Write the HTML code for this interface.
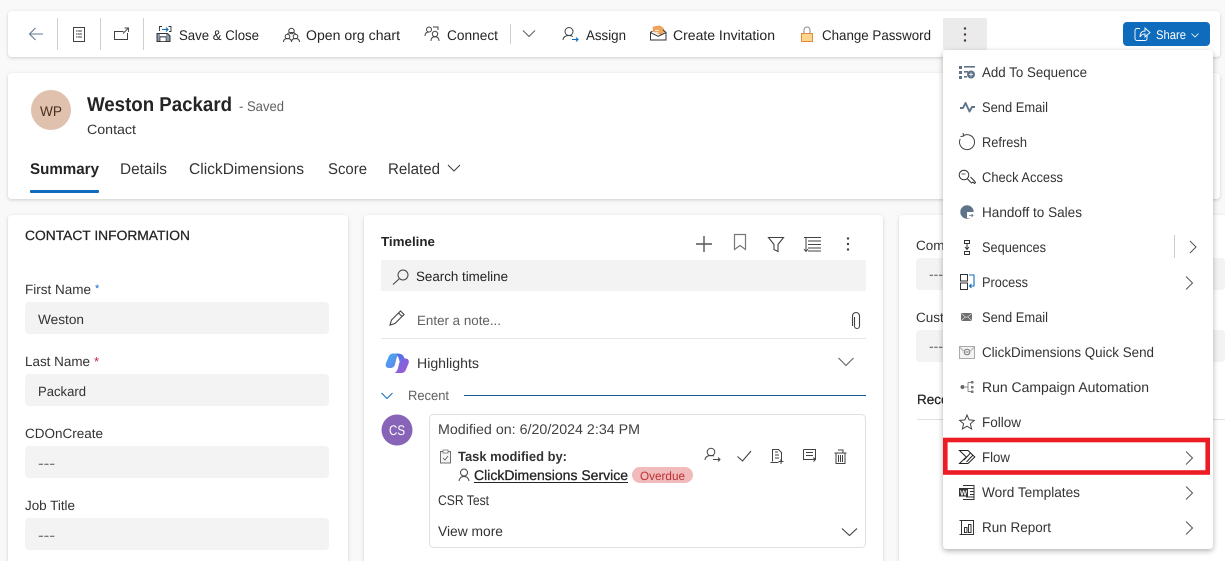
<!DOCTYPE html>
<html><head><meta charset="utf-8"><title>Weston Packard - Contact</title>
<style>
html,body{margin:0;padding:0;width:1225px;height:561px;overflow:hidden;background:#f9f9f9}
svg{display:block}
text{font-family:"Liberation Sans",sans-serif;font-size:14px;fill:#242424}
.g{fill:#616161}.b{font-weight:700}.m{fill:#333}
.i{fill:none;stroke:#424242;stroke-width:1}
</style></head><body>
<svg width="1225" height="561" viewBox="0 0 1225 561" xmlns="http://www.w3.org/2000/svg" text-rendering="geometricPrecision">
<defs>
<filter id="s" x="-5%" y="-20%" width="110%" height="140%"><feDropShadow dx="0" dy="1" stdDeviation="1.5" flood-color="#000" flood-opacity=".18"/></filter>
<filter id="ms" x="-10%" y="-5%" width="120%" height="110%"><feDropShadow dx="0" dy="2" stdDeviation="3" flood-color="#000" flood-opacity=".3"/></filter>
<linearGradient id="cl" x1="0" y1="0" x2="1" y2="1"><stop offset="0" stop-color="#3fb0f2"/><stop offset="1" stop-color="#6f7bea"/></linearGradient>
<linearGradient id="cr" x1="0" y1="0" x2="1" y2="1"><stop offset="0" stop-color="#5f70ea"/><stop offset="1" stop-color="#a954cf"/></linearGradient>
</defs>
<rect width="1225" height="561" fill="#f9f9f9"/>
<!-- cards -->
<rect x="8" y="11" width="1212" height="46" rx="4" fill="#fff" filter="url(#s)"/>
<rect x="8" y="73" width="1212" height="126" rx="4" fill="#fff" filter="url(#s)"/>
<rect x="8" y="215" width="340" height="360" rx="4" fill="#fff" filter="url(#s)"/>
<rect x="364" y="215" width="519" height="360" rx="4" fill="#fff" filter="url(#s)"/>
<rect x="899" y="215" width="340" height="360" rx="4" fill="#fff" filter="url(#s)"/>

<!-- toolbar -->
<g stroke="#cfcfcf"><path d="M57.5 18V50M100.5 18V50M143.5 18V50M510.5 24V44"/></g>
<path d="M43 34H29.5M35.5 28l-6 6 6 6" fill="none" stroke="#66788f" stroke-width="1.1"/>
<g class="i"><rect x="73.5" y="27.5" width="11" height="14"/><path d="M76 31h6M76 34h6M76 37h6" stroke-dasharray="1 .5 5 0"/></g>
<g class="i"><path d="M127.5 33v6.500h-13v-8h9"/><path d="M123 33.500l5-5M124.500 28h4v4" stroke-width=".9"/></g>
<g><path d="M157 33.500h10.500l2.500 2.500v5.500h-13z" fill="#8a9bb0" stroke="#333"/><rect x="160" y="37" width="6" height="4.500" fill="#fff" stroke="#333" stroke-width=".7"/><path d="M160 34h6v2h-6z" fill="#fff"/><path d="M159.500 31v-4.500h2.500M168.500 26.500h2.500v5h-2" fill="none" stroke="#333" stroke-width=".9"/><path d="M162 29.500h6M166 27.500l2 2-2 2" fill="none" stroke="#0f6cbd" stroke-width="1.100"/></g>
<text x="179" y="40" textLength="80" lengthAdjust="spacingAndGlyphs">Save &amp; Close</text>
<g class="i"><circle cx="291.500" cy="31" r="2.700"/><circle cx="287.500" cy="36.500" r="2.300"/><circle cx="295.500" cy="36.500" r="2.300"/><path d="M283.500 42c0-2.500 1.500-3.500 4-3.500s4 1 4 3.500M291.500 42c0-2.500 1.500-3.500 4-3.500s4 1 4 3.500M287.500 34c.5-1 2-1.500 4-1.500s3.500.5 4 1.500"/></g>
<text x="306" y="40" textLength="94" lengthAdjust="spacingAndGlyphs">Open org chart</text>
<g class="i"><circle cx="429" cy="29.500" r="2.500"/><path d="M425 36c0-2.500 1.500-4 4-4"/><circle cx="435" cy="34" r="2.700"/><path d="M431 41c0-2.800 1.500-4.300 4-4.300s4 1.500 4 4.300"/><path d="M433 27h5v3"/></g>
<text x="447" y="40" textLength="51" lengthAdjust="spacingAndGlyphs">Connect</text>
<path d="M523 30.500l6 6 6-6" fill="none" stroke="#616161" stroke-width="1.100"/>
<g class="i"><circle cx="569" cy="31.500" r="4"/><path d="M563 40c.3-3 2.500-4.500 6-4.500 1.500 0 2.800.3 3.800 1"/></g>
<path d="M572 39.500h6M576 37.500l2 2-2 2" fill="none" stroke="#0f6cbd" stroke-width="1.100"/>
<text x="586" y="40" textLength="40" lengthAdjust="spacingAndGlyphs">Assign</text>
<path d="M653 27l6.500-1.200 3.500 2.200 1 3.500-3.500 3-7-3z" fill="#f2a65a" stroke="#e0914a" stroke-width=".6"/>
<path d="M655 30.500h4M655.500 32.500h3" stroke="#fff" stroke-width=".8"/>
<path d="M650.500 32.500l2-1.500M663 29.800l3 2.700v7.500h-15.500v-7.500l7.700 3.800 7.800-3.800" fill="none" stroke="#333" stroke-width="1"/>
<text x="673" y="40" textLength="102" lengthAdjust="spacingAndGlyphs">Create Invitation</text>
<rect x="801.500" y="33.500" width="11" height="8" fill="#fbd68c" stroke="#e8883a"/>
<path d="M804 33.500V30a3 3 0 0 1 6 0v3.500" fill="none" stroke="#8a8a8a"/>
<text x="822" y="40" textLength="109" lengthAdjust="spacingAndGlyphs">Change Password</text>
<rect x="943" y="18" width="44" height="32" rx="2" fill="#ebebeb"/>
<g fill="#50382c"><circle cx="965" cy="28.500" r="1.200"/><circle cx="965" cy="34.500" r="1.200"/><circle cx="965" cy="40.500" r="1.200"/></g>
<rect x="1123" y="22" width="87" height="24" rx="4" fill="#0f6cbd"/>
<path d="M1148 34.500v4a2 2 0 0 1-2 2h-8a2 2 0 0 1-2-2v-8a2 2 0 0 1 2-2h3" fill="none" stroke="#fff" stroke-width=".9" transform="translate(-1 0)"/>
<path d="M1140 37c0-4 2-6 5-6v-3l5 4.500-5 4.500v-3c-2.500 0-4 1-5 3z" fill="none" stroke="#fff" stroke-width=".9"/>
<text x="1156" y="39" style="fill:#fff;font-size:12.500px" textLength="30" lengthAdjust="spacingAndGlyphs">Share</text>
<path d="M1191.500 33.500l3.500 3.500 3.500-3.500" fill="none" stroke="#fff" stroke-width=".8"/>

<!-- header -->
<circle cx="51" cy="110" r="20" fill="#dfc1ae"/>
<text x="40" y="116" style="font-size:14px;fill:#4a2f20" textLength="22" lengthAdjust="spacingAndGlyphs">WP</text>
<text x="87" y="111" class="b" style="font-size:20px" textLength="145" lengthAdjust="spacingAndGlyphs">Weston Packard</text>
<text x="239" y="111" class="g" textLength="45" lengthAdjust="spacingAndGlyphs">- Saved</text>
<text x="87" y="134" style="font-size:13.500px;fill:#333" textLength="49" lengthAdjust="spacingAndGlyphs">Contact</text>
<text x="30" y="174" class="b" style="font-size:15.500px" textLength="69" lengthAdjust="spacingAndGlyphs">Summary</text>
<text x="120" y="174" style="font-size:15.500px;fill:#333" textLength="47" lengthAdjust="spacingAndGlyphs">Details</text>
<text x="189" y="174" style="font-size:15.500px;fill:#333" textLength="115" lengthAdjust="spacingAndGlyphs">ClickDimensions</text>
<text x="328" y="174" style="font-size:15.500px;fill:#333" textLength="39" lengthAdjust="spacingAndGlyphs">Score</text>
<text x="388" y="174" style="font-size:15.500px;fill:#333" textLength="52" lengthAdjust="spacingAndGlyphs">Related</text>
<path d="M448 165l6 6 6-6" fill="none" stroke="#424242" stroke-width="1.100"/>
<rect x="30" y="190" width="69" height="3" rx="1" fill="#0f6cbd"/>

<!-- contact info -->
<text x="25" y="240" style="font-size:13.500px;stroke:#242424;stroke-width:.25" textLength="165" lengthAdjust="spacingAndGlyphs">CONTACT INFORMATION</text>
<text x="25" y="294" style="font-size:13.500px;fill:#333" textLength="66" lengthAdjust="spacingAndGlyphs">First Name</text>
<text x="95" y="292" style="font-size:11px;fill:#0f6cbd">*</text>
<rect x="25" y="302" width="304" height="32" rx="4" fill="#f3f3f3"/>
<text x="38" y="324" style="font-size:13.500px;fill:#333" textLength="46" lengthAdjust="spacingAndGlyphs">Weston</text>
<text x="25" y="366" style="font-size:13.500px;fill:#333" textLength="65" lengthAdjust="spacingAndGlyphs">Last Name</text>
<text x="94" y="366" style="font-size:13px;fill:#c4314b">*</text>
<rect x="25" y="374" width="304" height="32" rx="4" fill="#f3f3f3"/>
<text x="38" y="396" style="font-size:13.500px;fill:#333" textLength="48" lengthAdjust="spacingAndGlyphs">Packard</text>
<text x="25" y="438" style="font-size:13.500px;fill:#333" textLength="78" lengthAdjust="spacingAndGlyphs">CDOnCreate</text>
<rect x="25" y="446" width="304" height="32" rx="4" fill="#f3f3f3"/>
<text x="38" y="468" class="g" textLength="17" lengthAdjust="spacingAndGlyphs">---</text>
<text x="25" y="510" style="font-size:13.500px;fill:#333" textLength="50" lengthAdjust="spacingAndGlyphs">Job Title</text>
<rect x="25" y="518" width="304" height="32" rx="4" fill="#f3f3f3"/>
<text x="38" y="540" class="g" textLength="17" lengthAdjust="spacingAndGlyphs">---</text>

<!-- timeline -->
<text x="381" y="246" class="b" style="font-size:13px" textLength="54" lengthAdjust="spacingAndGlyphs">Timeline</text>
<path d="M704 236v16M696 244h16" stroke="#555" stroke-width="1.400"/>
<path d="M734.500 234.500h11v15l-5.500-4-5.500 4z" fill="none" stroke="#777" stroke-width="1.200"/>
<path d="M768.500 237.500h15l-5.500 7v7l-4-2v-5z" fill="none" stroke="#424242" stroke-width="1.100"/>
<g fill="none" stroke="#424242"><path d="M804 237.500h17M808 241h13M808 244.500h13M808 248h13M808 251h13" stroke-width=".9"/><path d="M806 238v13M804 249l2 2.500 2-2.500" stroke-width="1"/></g>
<g fill="#424242"><circle cx="848" cy="238.500" r="1.200"/><circle cx="848" cy="244" r="1.200"/><circle cx="848" cy="249.500" r="1.200"/></g>
<rect x="381" y="260" width="485" height="31" fill="#f3f3f3"/>
<circle cx="403" cy="275" r="5" fill="none" stroke="#424242"/><path d="M399 279l-6 5.500" stroke="#424242" stroke-width="1.100"/>
<text x="416" y="281" style="font-size:13.500px" textLength="92" lengthAdjust="spacingAndGlyphs">Search timeline</text>
<path d="M390 325l1.500-5 9-9 3.500 3.500-9 9zM398.500 313l3.500 3.500" fill="none" stroke="#424242" stroke-width="1.100"/>
<text x="417" y="325" class="g" style="font-size:13.500px" textLength="84" lengthAdjust="spacingAndGlyphs">Enter a note...</text>
<path d="M853 317v9a2.500 2.500 0 0 0 5 0v-10a3.500 3.500 0 0 0-7 0v10" transform="translate(1.500 0)" fill="none" stroke="#424242" stroke-width="1.100"/>
<path d="M381 338.500H866" stroke="#e5e5e5"/>
<!-- copilot -->
<path d="M393 353.500h7c-2 1-3 3-3.500 5l-1.500 6c-.6 2.200-2.500 3.500-4.500 3.500h-1.500c-2.800 0-4-2.300-3-5l2.500-6c1-2.500 2.800-3.500 4.500-3.500z" fill="url(#cl)"/>
<path d="M401.500 373h-7c2-1 3-3 3.500-5l1.500-6c.6-2.200 2.500-3.500 4.500-3.500h1.500c2.800 0 4 2.300 3 5l-2.500 6c-1 2.500-2.800 3.500-4.500 3.500z" fill="url(#cr)"/>
<path d="M396 354h4c2.500 0 4 2.500 4.500 4.500-2 0-4 1-5 3-.5-3-1.500-6-3.500-7.500z" fill="#5a6ee6"/>
<text x="417" y="368" style="font-size:14px;fill:#333" textLength="62" lengthAdjust="spacingAndGlyphs">Highlights</text>
<path d="M838.500 358l7.500 7.500 7.500-7.500" fill="none" stroke="#616161" stroke-width="1.100"/>
<path d="M381.500 393l5.500 5.500 5.500-5.500" fill="none" stroke="#0f6cbd" stroke-width="1"/>
<text x="408" y="400" class="g" style="font-size:13.500px" textLength="41" lengthAdjust="spacingAndGlyphs">Recent</text>
<path d="M464 395.500H866" stroke="#115a96"/>
<circle cx="397" cy="430" r="15.500" fill="#8764b8"/>
<text x="389" y="435" style="font-size:14px;fill:#fff" textLength="16" lengthAdjust="spacingAndGlyphs">CS</text>
<rect x="429.500" y="414.500" width="436" height="133" rx="4" fill="#fff" stroke="#e0e0e0"/>
<text x="438" y="434" style="font-size:14px;fill:#424242" textLength="202" lengthAdjust="spacingAndGlyphs">Modified on: 6/20/2024 2:34 PM</text>
<rect x="440.500" y="451.500" width="10" height="11.500" fill="#f5f5f5" stroke="#707070"/><rect x="443" y="450" width="5" height="3" fill="#fff" stroke="#707070" stroke-width=".8"/><path d="M443 458l2 2 3-4" fill="none" stroke="#555" stroke-width=".8"/>
<text x="458" y="461" class="b" style="font-size:13.500px;fill:#333" textLength="109" lengthAdjust="spacingAndGlyphs">Task modified by:</text>
<circle cx="464" cy="472.500" r="3.500" fill="none" stroke="#424242"/><path d="M459 481c.5-3 2.500-4.500 5-4.500s4.500 1.500 5 4.500" fill="none" stroke="#424242"/>
<text x="474" y="480" style="font-size:14px;stroke:#242424;stroke-width:.3" textLength="154" lengthAdjust="spacingAndGlyphs">ClickDimensions Service</text>
<path d="M474 482.500H628" stroke="#242424"/>
<rect x="632" y="467" width="61" height="16" rx="8" fill="#f1bbbc"/>
<text x="640" y="480" style="font-size:12px;fill:#bc2f32" textLength="45" lengthAdjust="spacingAndGlyphs">Overdue</text>
<text x="438" y="505" style="font-size:14px;fill:#333" textLength="51" lengthAdjust="spacingAndGlyphs">CSR Test</text>
<text x="438" y="536" style="font-size:14px;fill:#333" textLength="65" lengthAdjust="spacingAndGlyphs">View more</text>
<path d="M842 528.500l7.500 7 7.500-7" fill="none" stroke="#424242" stroke-width="1.100"/>
<g class="i"><circle cx="711" cy="452" r="3.800"/><path d="M705 460c.3-3 2.500-4.500 6-4.500 1.200 0 2.300.2 3 .6M713 459.500h7M718 457.500l2 2-2 2"/></g>
<path d="M737.500 456.500l5 4.500 8.500-10" fill="none" stroke="#424242" stroke-width="1.100"/>
<g class="i"><path d="M772.500 461.500v-12h6l3 3v9M770.500 462.500h8M775 452h3M775 455h4M775 458h4M781 459v5M778.500 461.500h5"/></g>
<g class="i"><path d="M803.500 449.500h12v9h-2M803.500 449.500v10h8M806 452.500h7M806 455.500h7M811 459.500h4M813.500 457.500l2 2-2 2"/></g>
<g class="i"><path d="M834.500 453h12M836 453v10.500h9V453M838 450h5v3M838.500 455v7M840.500 455v7M842.500 455v7"/></g>

<!-- right column -->
<text x="916" y="250" style="font-size:13.500px;fill:#333">Company</text>
<rect x="916" y="258" width="309" height="32" rx="4" fill="#f3f3f3"/>
<text x="929" y="279" class="g">---</text>
<text x="916" y="322" style="font-size:13.500px;fill:#333">Customer</text>
<rect x="916" y="330" width="309" height="32" rx="4" fill="#f3f3f3"/>
<text x="929" y="351" class="g">---</text>
<text x="917" y="404" style="font-size:13.500px;stroke:#242424;stroke-width:.25">Recent</text>
<path d="M917 419.500H1225" stroke="#e0e0e0"/>

<!-- menu -->
<rect x="943" y="50" width="270" height="499" rx="4" fill="#fff" filter="url(#ms)"/>
<!-- add to sequence -->
<g fill="#5f7389"><rect x="959" y="66" width="3" height="3"/><rect x="959" y="71" width="3" height="3"/><rect x="959" y="76" width="3" height="3"/><rect x="964" y="66" width="11" height="1.600"/><rect x="964" y="71" width="4" height="1.600"/><rect x="964" y="76" width="3" height="1.600"/><circle cx="971" cy="74.500" r="4"/></g>
<path d="M969 74.500h4M971 72.500v4" stroke="#fff" stroke-width=".8"/>
<text x="982" y="77" class="m" textLength="105" lengthAdjust="spacingAndGlyphs">Add To Sequence</text>
<!-- pulse -->
<path d="M960 108h3l2.500-5 4 8.500 2.500-4.500h3" fill="none" stroke="#5f7389" stroke-width="1.900" stroke-linejoin="round"/>
<text x="982" y="112" class="m" textLength="66" lengthAdjust="spacingAndGlyphs">Send Email</text>
<!-- refresh -->
<path d="M963.500 135.500A7.500 7.500 0 1 1 960.200 139M963 133l.7 3-3.200.6" fill="none" stroke="#424242" stroke-width="1"/>
<text x="982" y="147" class="m" textLength="45" lengthAdjust="spacingAndGlyphs">Refresh</text>
<!-- key -->
<circle cx="964" cy="175" r="4.800" fill="none" stroke="#333"/><path d="M961.500 174h4" stroke="#333" stroke-width=".8"/>
<path d="M967.500 179l4 4 1.500-1 1.500 1.500 1-1-1-1.500-4-4" fill="none" stroke="#333"/>
<text x="982" y="182" class="m" textLength="81" lengthAdjust="spacingAndGlyphs">Check Access</text>
<!-- handoff -->
<circle cx="967" cy="212" r="6.700" fill="#5f7389"/>
<path d="M967 212h7v6h-7z" fill="#fff"/><path d="M969 215.500h4M971.500 214l1.500 1.500-1.500 1.500" fill="none" stroke="#5f7389" stroke-width=".8"/>
<text x="982" y="217" class="m" textLength="100" lengthAdjust="spacingAndGlyphs">Handoff to Sales</text>
<!-- sequences -->
<g fill="none" stroke="#333"><rect x="964.500" y="240.500" width="5" height="3"/><rect x="964.500" y="251.500" width="5" height="3"/><path d="M967 244v5M965 247l2 2.500 2-2.500"/></g>
<text x="982" y="252" class="m" textLength="64" lengthAdjust="spacingAndGlyphs">Sequences</text>
<path d="M1174.500 235V258" stroke="#ccc"/>
<path d="M1190 241l6 6-6 6" fill="none" stroke="#555"/>
<!-- process -->
<g fill="none" stroke="#333"><rect x="960.500" y="274.500" width="7" height="6.500"/><rect x="960.500" y="283" width="7" height="6.500"/></g>
<path d="M969 275h5v11h-4.500M971.500 284l-2 2 2 2" fill="none" stroke="#0f6cbd" stroke-width="1.100"/>
<text x="982" y="287" class="m" textLength="46" lengthAdjust="spacingAndGlyphs">Process</text>
<path d="M1186 276.500l6.500 6.500-6.500 6.500" fill="none" stroke="#555"/>
<!-- mail -->
<rect x="961" y="313" width="11" height="8" fill="#6e6e6e"/><path d="M961 313.500l5.500 4 5.500-4M961 321l4-4M972 321l-4-4" fill="none" stroke="#ddd" stroke-width=".7"/>
<text x="982" y="322" class="m" textLength="66" lengthAdjust="spacingAndGlyphs">Send Email</text>
<!-- quick send -->
<rect x="959.500" y="346.500" width="15" height="12" fill="#f3f3f3" stroke="#aaa"/><path d="M959.500 347l4 4M974.500 347l-4 4" stroke="#aaa"/><circle cx="967" cy="352" r="2.800" fill="none" stroke="#777"/><path d="M965.500 352h3" stroke="#777"/>
<text x="982" y="357" class="m" textLength="172" lengthAdjust="spacingAndGlyphs">ClickDimensions Quick Send</text>
<!-- campaign -->
<circle cx="962.500" cy="387" r="2" fill="#666"/><path d="M965 387h3M968 382.500h4.500M968 382.500v9M968 391.500h4.500" fill="none" stroke="#888"/><g fill="#777"><rect x="971" y="381" width="2.500" height="2.500"/><rect x="971" y="386" width="2.500" height="2.500"/><rect x="971" y="390.500" width="2.500" height="2.500"/></g>
<text x="982" y="392" class="m" textLength="167" lengthAdjust="spacingAndGlyphs">Run Campaign Automation</text>
<!-- star -->
<path d="M967 415l2.100 4.900 5.200.5-3.900 3.400 1.200 5.200-4.600-2.800-4.600 2.800 1.200-5.200-3.900-3.400 5.200-.5z" fill="none" stroke="#424242"/>
<text x="982" y="427" class="m" textLength="39" lengthAdjust="spacingAndGlyphs">Follow</text>
<!-- flow -->
<path d="M959.500 450.500h8.500l6.800 6.500-6.800 6.500h-8.500l6.800-6.500zM964 460l6.500-7M966.500 462l6.500-7" fill="none" stroke="#222" stroke-width="1"/>
<text x="982" y="462" class="m" textLength="28" lengthAdjust="spacingAndGlyphs">Flow</text>
<path d="M1186 451.500l6.500 6.500-6.500 6.500" fill="none" stroke="#555"/>
<!-- red -->
<rect x="945.300" y="440" width="262.400" height="32.500" fill="none" stroke="#ed1c24" stroke-width="4.600"/>
<!-- word -->
<path d="M963 485.500h11v14h-11M966 488.500h8M970 491.500h4M970 494.500h4M966 497h8" fill="none" stroke="#333"/>
<rect x="959" y="488" width="9" height="8.500" fill="#333"/>
<text x="960" y="495.500" style="font-size:7.500px;fill:#fff;font-weight:700">W</text>
<text x="982" y="497" class="m" textLength="98" lengthAdjust="spacingAndGlyphs">Word Templates</text>
<path d="M1186 486.500l6.500 6.500-6.500 6.500" fill="none" stroke="#555"/>
<!-- report -->
<g fill="none" stroke="#333"><rect x="961.500" y="520.500" width="12" height="14"/><path d="M959.500 520.500h4M959.500 534.500h4"/><rect x="964.500" y="527.500" width="2.500" height="5"/><rect x="968.500" y="524.500" width="2.500" height="8"/></g>
<text x="982" y="532" class="m" textLength="69" lengthAdjust="spacingAndGlyphs">Run Report</text>
<path d="M1186 521.500l6.500 6.500-6.500 6.500" fill="none" stroke="#555"/>
</svg>
</body></html>
